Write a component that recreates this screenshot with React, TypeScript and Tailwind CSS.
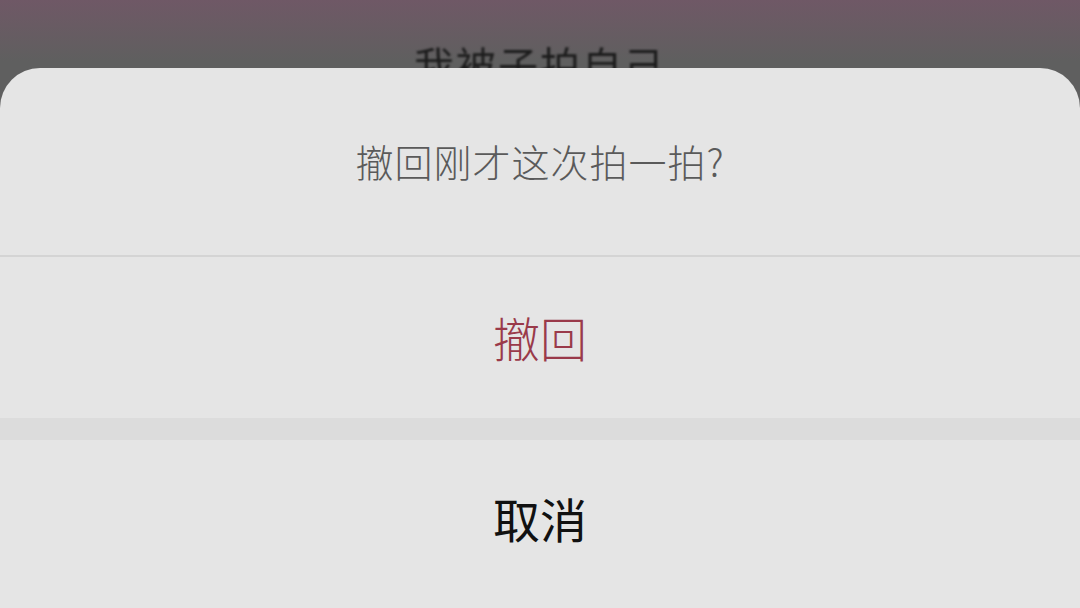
import React from "react";

export default function App() {
    return (
        <div
            className="relative w-[1080px] h-[608px] overflow-hidden bg-linear-to-b from-[#6f5866] from-0% to-[#5f5f5f] to-[10%]"
            style={{ fontFamily: '"Noto Sans CJK SC", "Noto Sans", sans-serif' }}
        >
            {/* page content peeking out behind the sheet */}
            <div className="flex justify-center pt-[44px]">
                <span className="text-[40px] leading-none text-[#1c1c1c] tracking-[2px] blur-[1px]">
                    我被子拍自己
                </span>
            </div>

            <div className="absolute left-0 right-0 top-[68px] bottom-0 flex flex-col rounded-t-[40px] bg-[#e5e5e5]">
                <div className="flex h-[187px] items-center justify-center pb-[2px]">
                    <span className="text-[38px] text-[#5a5a5a] font-light tracking-[1px]">
                        撤回刚才这次拍一拍?
                    </span>
                </div>
                <div className="h-[2px] bg-[#d4d4d4]" />
                <button className="flex h-[161px] items-center justify-center">
                    <span className="text-[47px] text-[#9a3a4a] font-light">撤回</span>
                </button>
                <div className="h-[22px] bg-[#dcdcdc]" />
                <button className="flex h-[156px] items-center justify-center">
                    <span className="text-[47px] text-[#111111]">取消</span>
                </button>
            </div>
        </div>
    );
}
